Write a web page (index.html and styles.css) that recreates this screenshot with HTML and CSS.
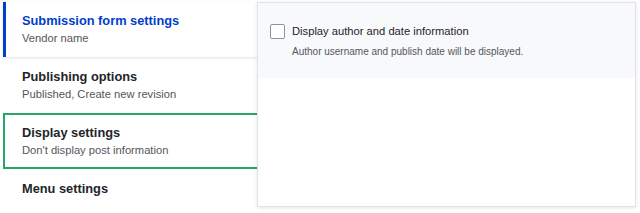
FILE: index.html
```html
<!DOCTYPE html>
<html>
<head>
<meta charset="utf-8">
<link rel="stylesheet" href="styles.css">
</head>
<body>
<div class="tabs">
  <ul class="menu">
    <li class="item selected">
      <span class="title">Submission form settings</span>
      <span class="summary">Vendor name</span>
    </li>
    <li class="item">
      <span class="title">Publishing options</span>
      <span class="summary">Published, Create new revision</span>
    </li>
    <li class="item focused">
      <span class="title">Display settings</span>
      <span class="summary">Don't display post information</span>
    </li>
    <li class="item last">
      <span class="title">Menu settings</span>
    </li>
  </ul>
  <div class="pane">
    <div class="pane-top">
      <div class="check-row">
        <span class="checkbox"></span>
        <span class="label">Display author and date information</span>
      </div>
      <div class="desc">Author username and publish date will be displayed.</div>
    </div>
  </div>
</div>
</body>
</html>
```
FILE: styles.css
```css
html, body {
  margin: 0;
  padding: 0;
  background: #ffffff;
}
body {
  font-family: "Liberation Sans", Arial, sans-serif;
  width: 640px;
  height: 213px;
  overflow: hidden;
}
.tabs {
  display: flex;
  align-items: flex-start;
  padding: 2px 4px 0 3px;
}
.menu {
  list-style: none;
  margin: 0;
  padding: 0;
  width: 255px;
  flex: none;
  margin-right: -1px;
}
.item {
  box-sizing: border-box;
  height: 56px;
  padding: 12px 0 0 19px;
  display: flex;
  flex-direction: column;
}
.item.selected {
  height: 55px;
  background: #ffffff;
  border-left: 3px solid #003ecc;
  padding-top: 11px;
  padding-left: 16px;
  box-shadow: 0 1px 3px rgba(0, 0, 0, 0.12);
  position: relative;
}
.item.focused {
  border: 2px solid #26a769;
  border-right: none;
  padding-top: 10px;
  padding-left: 17px;
}
.item.last {
  height: 40px;
}
.title {
  font-size: 12.8px;
  line-height: 16px;
  font-weight: bold;
  color: #232429;
}
.selected .title {
  color: #003ecc;
}
.summary {
  font-size: 11.2px;
  line-height: 19px;
  color: #55565b;
}
.pane {
  flex: 1;
  height: 205px;
  box-sizing: border-box;
  border: 1px solid #e3e4e9;
  background: #ffffff;
  box-shadow: 0 1px 4px rgba(0, 0, 0, 0.1);
  position: relative;
  z-index: 1;
}
.pane-top {
  background: #f8f9fb;
  height: 75px;
  box-sizing: border-box;
  padding: 21px 12px 0;
}
.check-row {
  display: flex;
  align-items: center;
  gap: 7px;
}
.checkbox {
  width: 15px;
  height: 15px;
  box-sizing: border-box;
  border: 1px solid #8e929c;
  border-radius: 2px;
  background: #ffffff;
  flex: none;
}
.label {
  font-size: 11.2px;
  line-height: 15px;
  color: #232429;
}
.desc {
  margin: 6px 0 0 22px;
  font-size: 10px;
  line-height: 13px;
  color: #55565b;
}
```
